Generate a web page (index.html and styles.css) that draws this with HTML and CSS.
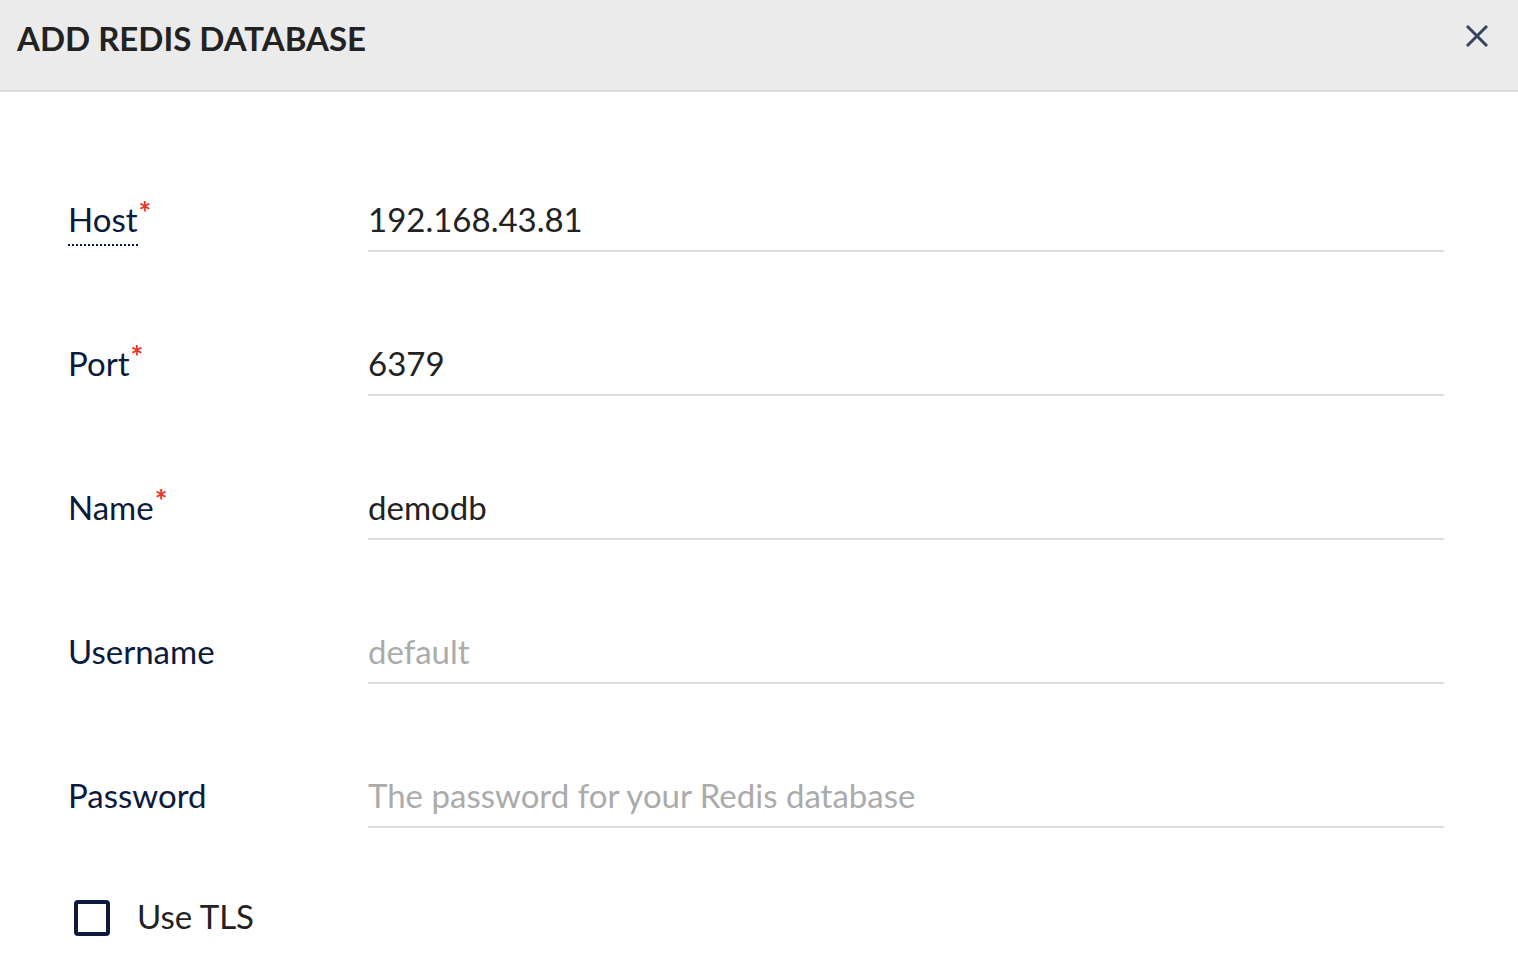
FILE: index.html
```html
<!DOCTYPE html>
<html>
<head>
<meta charset="utf-8">
<link rel="stylesheet" href="styles.css">
</head>
<body>
<div class="modal">
  <header class="modal-header">
    <h1 class="modal-title">ADD REDIS DATABASE</h1>
    <button class="close-btn" aria-label="Close">
      <svg width="24" height="24" viewBox="0 0 24 24"><path d="M2 2 L22 22 M22 2 L2 22" stroke="#344260" stroke-width="3" fill="none"/></svg>
    </button>
  </header>
  <form class="form">
    <div class="field">
      <label class="label"><span class="hint">Host</span><sup class="req">*</sup></label>
      <input class="input" type="text" value="192.168.43.81">
    </div>
    <div class="field">
      <label class="label">Port<sup class="req">*</sup></label>
      <input class="input" type="text" value="6379">
    </div>
    <div class="field">
      <label class="label">Name<sup class="req">*</sup></label>
      <input class="input" type="text" value="demodb">
    </div>
    <div class="field">
      <label class="label">Username</label>
      <input class="input" type="text" placeholder="default">
    </div>
    <div class="field">
      <label class="label">Password</label>
      <input class="input" type="password" placeholder="The password for your Redis database">
    </div>
    <label class="check">
      <span class="box"></span>
      <span class="check-text">Use TLS</span>
    </label>
  </form>
</div>
</body>
</html>
```
FILE: styles.css
```css
html, body {
  margin: 0;
  padding: 0;
  background: #ffffff;
}
body {
  font-family: "Lato", "Open Sans", sans-serif;
  width: 1518px;
  height: 968px;
  overflow: hidden;
}
.modal-header {
  height: 90px;
  background: #ebebeb;
  border-bottom: 2px solid #dddddd;
  display: flex;
  align-items: flex-start;
  justify-content: space-between;
  padding: 0 29px 0 17px;
}
.modal-title {
  margin: 0;
  padding-top: 18px;
  font-size: 33px;
  line-height: 40px;
  font-weight: 700;
  color: #222222;
  letter-spacing: 0;
}
.close-btn {
  margin-top: 24px;
  padding: 0;
  border: 0;
  background: none;
  width: 24px;
  height: 24px;
  display: flex;
}
.form {
  padding: 110px 74px 0 68px;
}
.field {
  display: grid;
  grid-template-columns: 300px 1fr;
  height: 50px;
  margin-bottom: 94px;
}
.label {
  font-size: 33px;
  line-height: 34px;
  color: #0b1a3e;
  white-space: nowrap;
}
.hint {
  display: inline-block;
  padding-bottom: 10px;
  background-image: linear-gradient(to right, #0b1a3e 50%, transparent 50%);
  background-size: 4px 2px;
  background-repeat: repeat-x;
  background-position: left bottom;
  line-height: 34px;
}
.req {
  color: #e8362a;
  font-size: 30px;
  font-weight: 700;
  line-height: 0;
  vertical-align: 8px;
  margin-left: 1px;
}
.input {
  box-sizing: border-box;
  height: 50px;
  width: 100%;
  margin: 0;
  padding: 0 0 14px 0;
  border: 0;
  border-bottom: 2px solid #dddddd;
  font-family: inherit;
  font-size: 33px;
  line-height: 34px;
  color: #222222;
  background: transparent;
  outline: none;
}
.input::placeholder {
  color: #ababab;
}
.check {
  display: flex;
  align-items: center;
  margin-top: -26px;
  padding-left: 6px;
}
.box {
  box-sizing: border-box;
  width: 36px;
  height: 36px;
  border: 4px solid #0b1a3e;
  border-radius: 4px;
}
.check-text {
  margin-left: 27px;
  padding-bottom: 4px;
  font-size: 33px;
  color: #222222;
}
```
